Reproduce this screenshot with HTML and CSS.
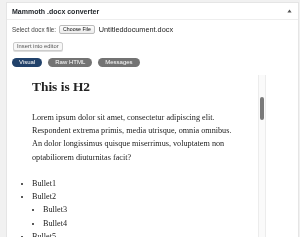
FILE: index.html
```html
<!DOCTYPE html>
<html>
	<head>
		<link rel="stylesheet" href="styles.css">
		<meta name="viewport" content="width=device-width, initial-scale=1.0">
	</head>
	<body>
	<div class="postbox">
		<div class="postbox-header">
			<span class="postbox-title">Mammoth .docx converter</span>
			<svg class="toggle" width="5" height="4" viewBox="0 0 5 4"><path d="M2.5 0.5 L4.6 3.5 L0.4 3.5 Z" fill="#555"/></svg>
		</div>
		<div class="inside">
			<div class="file-row">
				<label class="file-label">Select docx file:</label>
				<button class="file-button">Choose File</button>
				<span class="file-name">Untitleddocument.docx</span>
			</div>
			<div class="insert-row">
				<button class="wp-button">Insert into editor</button>
			</div>
			<div class="tabs">
				<span class="tab tab-active">Visual</span>
				<span class="tab">Raw HTML</span>
				<span class="tab">Messages</span>
			</div>
			<div class="preview">
				<div class="preview-doc">
					<h2>This is H2</h2>
					<p>Lorem ipsum dolor sit amet, consectetur adipiscing elit. Respondent extrema primis, media utrisque, omnia omnibus. An dolor longissimus quisque miserrimus, voluptatem non optabiliorem diuturnitas facit?</p>
					<ul>
						<li>Bullet1</li>
						<li>Bullet2
							<ul>
								<li>Bullet3</li>
								<li>Bullet4</li>
							</ul>
						</li>
						<li>Bullet5</li>
					</ul>
				</div>
				<div class="scroll-track"><div class="scroll-thumb"></div></div>
			</div>
		</div>
	</div>
	</body>
</html>
```

FILE: styles.css
```css
html {
	overflow: hidden;
}

body {
	margin: 0;
	width: 300px;
	height: 237px;
	overflow: hidden;
	background-color: #f1f1f1;
	font-family: "Liberation Sans", Arial, sans-serif;
	color: #444;
}

.postbox {
	margin: 2px 1px 0 6px;
	height: 260px;
	background-color: #fff;
	border: 1px solid #e5e5e5;
}

.postbox-header {
	height: 16px;
	display: flex;
	align-items: center;
	justify-content: space-between;
	padding: 0 6px 0 5px;
	border-bottom: 1px solid #eee;
	will-change: transform;
}

.postbox-title {
	font-size: 7px;
	font-weight: bold;
	color: #23282d;
}

.inside {
	padding-left: 5px;
	will-change: transform;
}

.file-row {
	margin-top: 5px;
	height: 9px;
	display: flex;
	align-items: center;
}

.file-label {
	font-size: 6.3px;
	margin-right: 3px;
}

.file-button {
	font-family: "Liberation Sans", Arial, sans-serif;
	font-size: 5.2px;
	color: #111;
	height: 9px;
	padding: 0 3px;
	margin: 0 4px 0 0;
	border: 1px solid #bbb;
	border-radius: 2px;
	background: linear-gradient(#fdfdfd, #ececec);
	line-height: 7px;
}

.file-name {
	font-size: 7.3px;
	color: #222;
}

.insert-row {
	margin-top: 8px;
	height: 9px;
	display: flex;
	padding-left: 1px;
}

.wp-button {
	font-family: "Liberation Sans", Arial, sans-serif;
	font-size: 5.8px;
	color: #555;
	height: 9px;
	padding: 0 3px;
	margin: 0;
	line-height: 7px;
	border: 1px solid #ccc;
	border-radius: 2px;
	background-color: #f7f7f7;
	box-shadow: 0 1px 0 #ddd;
}

.tabs {
	margin-top: 7px;
	display: flex;
	gap: 6px;
}

.tab {
	height: 9px;
	line-height: 9px;
	padding: 0 7px;
	border-radius: 5px;
	font-size: 6px;
	color: #fff;
	background-color: #737373;
}

.tab-active {
	background-color: #21416a;
}

.preview {
	margin-top: 8px;
	width: 254px;
	display: flex;
}

.preview-doc {
	flex: 1;
	padding: 4px 23px 0 20px;
	font-family: "Liberation Serif", "Times New Roman", serif;
	color: #222;
}

.preview-doc h2 {
	margin: 0;
	font-size: 13.4px;
	font-weight: bold;
	color: #222;
}

.preview-doc p {
	margin: 16px 0 13px;
	font-size: 8.2px;
	line-height: 13.2px;
}

.preview-doc ul {
	margin: 0;
	padding: 0;
	font-size: 8.2px;
	line-height: 13.3px;
	list-style: disc;
}

.preview-doc ul ul {
	padding-left: 11px;
}

.scroll-track {
	width: 6px;
	height: 170px;
	background-color: #fafafa;
	border-left: 1px solid #ececec;
	border-right: 1px solid #ececec;
}

.scroll-thumb {
	margin: 22px auto 0;
	width: 4px;
	height: 23px;
	border-radius: 2px;
	background-color: #7a7a7a;
}
```
